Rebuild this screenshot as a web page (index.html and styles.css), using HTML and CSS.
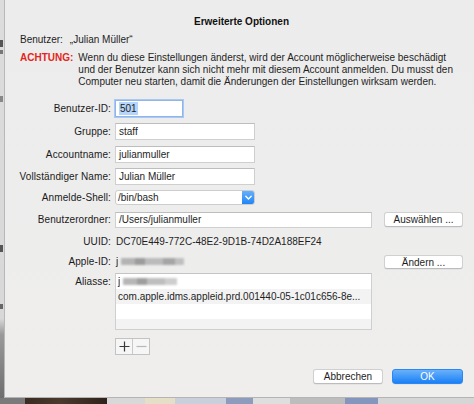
FILE: index.html
```html
<!DOCTYPE html>
<html lang="de">
<head>
<meta charset="utf-8">
<title>Erweiterte Optionen</title>
<link rel="stylesheet" href="styles.css">
</head>
<body>
<div class="screen">
  <div class="side">
    <i class="mark m1"></i>
    <i class="mark m2"></i>
    <i class="mark m3"></i>
    <i class="mark m4"></i>
    <i class="mark m5"></i>
  </div>
  <div class="dialog">
    <div class="title">Erweiterte Optionen</div>
    <div class="user"><span>Benutzer:</span><span>„Julian Müller“</span></div>
    <div class="warning">
      <span class="warn-label">ACHTUNG:</span>
      <p>Wenn du diese Einstellungen änderst, wird der Account möglicherweise beschädigt<br>und der Benutzer kann sich nicht mehr mit diesem Account anmelden. Du musst den<br>Computer neu starten, damit die Änderungen der Einstellungen wirksam werden.</p>
    </div>
    <div class="form">
      <div class="row r-id">
        <label>Benutzer-ID:</label>
        <div class="field field-id focus"><span class="sel">501</span></div>
      </div>
      <div class="row r-group">
        <label>Gruppe:</label>
        <div class="field field-mid">staff</div>
      </div>
      <div class="row r-account">
        <label>Accountname:</label>
        <div class="field field-mid">julianmuller</div>
      </div>
      <div class="row r-name">
        <label>Vollständiger Name:</label>
        <div class="field field-mid">Julian Müller</div>
      </div>
      <div class="row r-shell">
        <label>Anmelde-Shell:</label>
        <div class="popup">
          <span class="popup-text">/bin/bash</span>
          <span class="popup-arrow"><svg width="13" height="15" viewBox="0 0 13 15"><path d="M3.8 6.2 L6.5 8.9 L9.2 6.2" fill="none" stroke="#fff" stroke-width="1.4" stroke-linecap="round" stroke-linejoin="round"/></svg></span>
        </div>
      </div>
      <div class="row r-home">
        <label>Benutzerordner:</label>
        <div class="field field-wide">/Users/julianmuller</div>
        <button class="btn btn-side">Auswählen ...</button>
      </div>
      <div class="row r-uuid">
        <label>UUID:</label>
        <div class="value">DC70E449-772C-48E2-9D1B-74D2A188EF24</div>
      </div>
      <div class="row r-apple">
        <label>Apple-ID:</label>
        <div class="value value-wide">j<span class="blur"><i class="b1"></i><i class="b2"></i><i class="b3"></i><i class="b4"></i><i class="b5"></i></span></div>
        <button class="btn btn-side btn-low">Ändern ...</button>
      </div>
      <div class="row r-alias">
        <label class="top-label">Aliasse:</label>
        <div class="list">
          <div class="list-row">j<span class="blur"><i class="b1"></i><i class="b2"></i><i class="b3"></i><i class="b6"></i></span></div>
          <div class="list-row alt">com.apple.idms.appleid.prd.001440-05-1c01c656-8e...</div>
          <div class="list-row"></div>
          <div class="list-row alt"></div>
        </div>
      </div>
      <div class="row r-plus">
        <label></label>
        <div class="segmented">
          <span class="seg"><svg width="11" height="11" viewBox="0 0 11 11"><path d="M5.5 0.5 V10.5 M0.5 5.5 H10.5" stroke="#3a3a3a" stroke-width="1.2"/></svg></span>
          <span class="seg"><svg width="11" height="11" viewBox="0 0 11 11"><path d="M0.5 5.5 H10.5" stroke="#b8b8b8" stroke-width="1.2"/></svg></span>
        </div>
      </div>
    </div>
    <div class="footer">
      <button class="btn btn-cancel">Abbrechen</button>
      <button class="btn btn-ok">OK</button>
    </div>
  </div>
  <div class="bottom"></div>
</div>
</body>
</html>
```
FILE: styles.css
```css
html, body {
  margin: 0;
  padding: 0;
}
body {
  font-family: "Liberation Sans", Arial, sans-serif;
  font-size: 10px;
  color: #1e1e1e;
  background: #d5d5d5;
}
.screen {
  width: 474px;
  height: 404px;
  display: grid;
  grid-template-columns: 4px 1fr;
  grid-template-rows: 398px 6px;
  overflow: hidden;
}
.side {
  grid-row: 1;
  grid-column: 1;
  position: relative;
  overflow: hidden;
  background: linear-gradient(#dcdcdc 0, #d8d8d8 80%, #9a9a9a 84%, #6e6e6e 100%);
}
.mark {
  position: absolute;
  left: 0;
  width: 3px;
  background: #555;
}
.m1 { top: 40px; height: 7px; }
.m2 { top: 50px; height: 4px; background: #777; }
.m3 { top: 96px; height: 6px; background: #888; }
.m4 { top: 245px; height: 7px; }
.m5 { top: 304px; height: 5px; background: #666; }
.dialog {
  grid-row: 1;
  grid-column: 2;
  background: linear-gradient(#ececec, #efeeed);
  border-left: 1px solid #b8b8b8;
  border-bottom: 1px solid #b4b4b4;
  padding: 16px 14px 0 15px;
  display: flex;
  flex-direction: column;
}
.title {
  text-align: center;
  font-weight: bold;
  line-height: 12px;
  color: #111;
}
.user {
  margin-top: 6px;
  line-height: 12px;
  display: flex;
  gap: 7px;
}
.warning {
  margin-top: 6px;
  display: flex;
  gap: 5px;
  line-height: 12.2px;
}
.warn-label {
  color: #e3261d;
  font-weight: bold;
}
.warning p {
  margin: 0;
  white-space: nowrap;
}
.form {
  margin-top: 11px;
  display: flex;
  flex-direction: column;
}
.row {
  display: flex;
  align-items: center;
  gap: 4px;
  margin-left: -4px;
}
.row label {
  width: 95px;
  flex: none;
  text-align: right;
  white-space: nowrap;
  color: #1a1a1a;
  letter-spacing: 0.1px;
}
.r-id { margin-top: 0; }
.r-group { margin-top: 6px; }
.r-account { margin-top: 6px; }
.r-name { margin-top: 5px; }
.r-shell { margin-top: 5px; }
.r-home { margin-top: 7px; }
.r-uuid { margin-top: 6px; height: 16px; }
.r-apple { margin-top: 4px; height: 16px; }
.r-alias { margin-top: 3px; align-items: flex-start; }
.r-plus { margin-top: 8px; }
.top-label { padding-top: 3px; }
.field {
  box-sizing: border-box;
  height: 17px;
  background: #fff;
  border: 1px solid #cfcfcf;
  border-top-color: #bdbdbd;
  padding: 0 3px;
  line-height: 15px;
  color: #1e1e1e;
  white-space: nowrap;
}
.field-id {
  width: 68px;
}
.focus {
  border: 1px solid #8fb6ea;
  box-shadow: 0 0 0 1px #a9c8f2;
}
.sel {
  background: #b5d5fb;
  padding: 1px 1px;
}
.field-mid {
  width: 140px;
}
.field-wide {
  width: 257px;
  height: 16px;
  line-height: 14px;
}
.popup {
  box-sizing: border-box;
  width: 140px;
  height: 15px;
  display: flex;
  align-items: center;
  background: #fff;
  border: 1px solid #cdcdcd;
  border-radius: 3px;
  overflow: hidden;
}
.popup-text {
  flex: 1;
  padding-left: 2px;
}
.popup-arrow {
  width: 13px;
  height: 15px;
  display: flex;
  background: linear-gradient(#6cb3fa, #1a82f7);
  border-radius: 0 3px 3px 0;
  margin-right: -1px;
}
.btn {
  box-sizing: border-box;
  height: 15px;
  font-family: "Liberation Sans", Arial, sans-serif;
  font-size: 10px;
  color: #1e1e1e;
  background: #fff;
  border: 1px solid #d0d0d0;
  border-bottom-color: #bcbcbc;
  border-radius: 3px;
  padding: 0;
  line-height: 13px;
  box-shadow: 0 0.5px 0.5px rgba(0,0,0,0.08);
}
.btn-side {
  width: 79px;
  margin-left: 8px;
}
.r-home .btn-side { height: 15px; align-self: flex-start; }
.btn-low { height: 14px; }
.value {
  padding-left: 1px;
  white-space: nowrap;
  line-height: 16px;
}
.value-wide {
  width: 257px;
  box-sizing: border-box;
}
.blur {
  display: inline-flex;
  gap: 0;
  vertical-align: middle;
  margin-left: 3px;
  filter: blur(1.2px);
  opacity: 0.85;
}
.blur i {
  display: block;
  height: 7px;
  background: #9a9a9a;
}
.blur .b1 { width: 14px; background: #aaa; }
.blur .b2 { width: 10px; background: #8e8e8e; }
.blur .b3 { width: 18px; background: #b3b3b3; }
.blur .b4 { width: 12px; background: #999; }
.blur .b5 { width: 9px; background: #b8b8b8; }
.blur .b6 { width: 12px; background: #c6c6c6; }
.list {
  box-sizing: border-box;
  width: 257px;
  height: 57px;
  background: #fff;
  border: 1px solid #cfcfcf;
  border-top-color: #c4c4c4;
  overflow: hidden;
}
.list-row {
  height: 15px;
  line-height: 15px;
  padding-left: 2px;
  white-space: nowrap;
  color: #1e1e1e;
}
.list-row.alt {
  background: #f3f3f3;
}
.segmented {
  display: flex;
  border: 1px solid #c3c3c3;
  background: #f6f6f6;
}
.seg {
  width: 16px;
  height: 15px;
  display: flex;
  align-items: center;
  justify-content: center;
}
.seg + .seg {
  border-left: 1px solid #c9c9c9;
}
.footer {
  margin-top: 14px;
  display: flex;
  justify-content: flex-end;
  gap: 9px;
}
.btn-cancel {
  width: 70px;
}
.btn-ok {
  width: 71px;
  color: #fff;
  border: 1px solid #2a88f2;
  background: linear-gradient(#69b1fa, #1b80f6);
}
.bottom {
  grid-row: 2;
  grid-column: 1 / 3;
  background: linear-gradient(90deg,
    #7a7a7a 0, #7a7a7a 25px,
    #3a2c22 25px, #4a3a2e 60px, #2e221a 107px,
    #d8d8d8 107px, #d8d8d8 145px,
    #e6dfc8 145px, #e6dfc8 175px,
    #c9d0dc 175px, #c9d0dc 226px,
    #8d9cbc 226px, #8d9cbc 253px,
    #dedede 253px, #dedede 290px,
    #bdbdbd 290px, #bdbdbd 345px,
    #8496bd 345px, #8496bd 378px,
    #d6d6d6 378px, #d6d6d6 474px);
}
```
